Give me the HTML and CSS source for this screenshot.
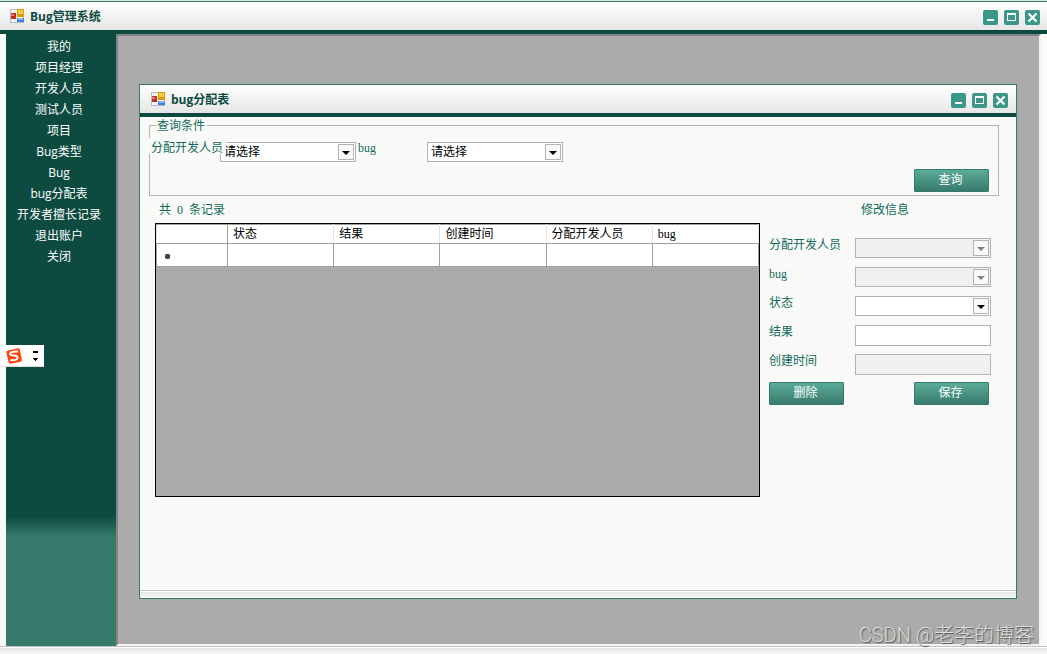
FILE: index.html
```html
<!DOCTYPE html>
<html lang="zh-CN">
<head>
  <meta charset="UTF-8" />
  <meta name="viewport" content="width=device-width, initial-scale=1.0"/>
  <title>Bug管理系统</title>

  <link rel="stylesheet" href="styles.css">
</head>
<body>

<!-- shared icons -->
<svg class="sprite" aria-hidden="true">
  <symbol id="icon-app" viewBox="0 0 14 14">
    <rect x="0.5" y="0.5" width="13" height="13" fill="#f4f5f7" stroke="#b9b9b9"/>
    <rect x="1" y="4" width="5" height="6" fill="#c22f22"/>
    <rect x="1" y="5" width="3" height="2" fill="#e8796b"/>
    <rect x="7" y="0" width="7" height="8" fill="#dd9d0c"/>
    <rect x="8" y="1" width="5" height="4" fill="#f7c93f"/>
    <rect x="7" y="9" width="7" height="4" fill="#3f7fe6"/>
    <rect x="8" y="9" width="5" height="2" fill="#8db8fb"/>
  </symbol>
  <symbol id="icon-min" viewBox="0 0 15 15">
    <rect x="4" y="9" width="7" height="2" fill="#fff"/>
  </symbol>
  <symbol id="icon-max" viewBox="0 0 15 15">
    <path d="M3 3h9v8H3zM4 5v5h7V5z" fill="#fff" fill-rule="evenodd"/>
  </symbol>
  <symbol id="icon-close" viewBox="0 0 15 15">
    <path d="M3.5 3.5l8 8M11.5 3.5l-8 8" stroke="#fff" stroke-width="2.2"/>
  </symbol>
</svg>

<header class="titlebar">
  <svg class="app-icon"><use href="#icon-app"/></svg>
  <h1>Bug管理系统</h1>
  <button class="win-btn" aria-label="最小化"><svg><use href="#icon-min"/></svg></button>
  <button class="win-btn" aria-label="最大化"><svg><use href="#icon-max"/></svg></button>
  <button class="win-btn" aria-label="关闭窗口"><svg><use href="#icon-close"/></svg></button>
</header>

<div class="main">
  <nav class="sidebar">
    <a href="#">我的</a>
    <a href="#">项目经理</a>
    <a href="#">开发人员</a>
    <a href="#">测试人员</a>
    <a href="#">项目</a>
    <a href="#">Bug类型</a>
    <a href="#">Bug</a>
    <a href="#">bug分配表</a>
    <a href="#">开发者擅长记录</a>
    <a href="#">退出账户</a>
    <a href="#">关闭</a>
  </nav>

  <main class="workspace">
    <section class="window">
      <div class="titlebar">
        <svg class="app-icon"><use href="#icon-app"/></svg>
        <h2>bug分配表</h2>
        <button class="win-btn" aria-label="最小化"><svg><use href="#icon-min"/></svg></button>
        <button class="win-btn" aria-label="最大化"><svg><use href="#icon-max"/></svg></button>
        <button class="win-btn" aria-label="关闭窗口"><svg><use href="#icon-close"/></svg></button>
      </div>

      <div class="window-body">
        <fieldset class="query">
          <legend>查询条件</legend>
          <div class="query-fields">
            <label class="dev-label" for="queryDev">分配开发人员</label>
            <div class="combo"><select id="queryDev"><option>请选择</option></select></div>
            <label class="bug-label" for="queryBug">bug</label>
            <div class="combo"><select id="queryBug"><option>请选择</option></select></div>
          </div>
          <button class="btn">查询</button>
        </fieldset>

        <div class="columns">
          <div class="records">
            <div class="count">共&nbsp; 0 &nbsp;条记录</div>
            <div class="grid-box">
              <table>
                <thead>
                  <tr>
                    <th class="row-head"></th>
                    <th>状态</th>
                    <th>结果</th>
                    <th>创建时间</th>
                    <th>分配开发人员</th>
                    <th>bug</th>
                  </tr>
                </thead>
                <tbody>
                  <tr>
                    <td class="row-head"><span class="new-row"></span></td>
                    <td></td>
                    <td></td>
                    <td></td>
                    <td></td>
                    <td></td>
                  </tr>
                </tbody>
              </table>
            </div>
          </div>

          <form class="edit">
            <h3>修改信息</h3>
            <div class="row">
              <label for="dev">分配开发人员</label>
              <div class="combo disabled"><select id="dev" disabled></select></div>
            </div>
            <div class="row">
              <label for="bug">bug</label>
              <div class="combo disabled"><select id="bug" disabled></select></div>
            </div>
            <div class="row">
              <label for="state">状态</label>
              <div class="combo"><select id="state"></select></div>
            </div>
            <div class="row">
              <label for="result">结果</label>
              <input type="text" id="result">
            </div>
            <div class="row">
              <label for="created">创建时间</label>
              <input type="text" id="created" disabled>
            </div>
            <div class="actions">
              <button type="button" class="btn">删除</button>
              <button type="button" class="btn">保存</button>
            </div>
          </form>
        </div>
      </div>

      <div class="statusbar"></div>
    </section>
  </main>
</div>

<div class="statusbar"></div>

<!-- input method bar docked at the left edge -->
<div class="ime">
  <svg class="ime-logo" viewBox="0 0 16 16">
    <path d="M2 2.500L12 0.300q1.400-.2 1.800 1.200L15.900 12q0 1.400-1.300 1.800L4.600 15.800q-1.500 0-1.900-1.300L0.300 4.500q0-1.400 1.700-2z" fill="#f8480f"/>
    <path d="M12 3.600Q5 3.200 4.200 5.600 4 7.400 7.800 7.600 12 7.900 11.600 10 10.600 12.600 4.400 12.200" fill="none" stroke="#fff" stroke-width="2"/>
  </svg>
  <svg class="ime-toggle" viewBox="0 0 5 10">
    <path d="M0 0h5v2H0zM0 7h5v1H4v1H3v1H2V9H1V8H0z"/>
  </svg>
</div>

<div class="watermark">CSDN @老李的博客</div>

</body>
</html>
```

FILE: styles.css
```css
*, *::before, *::after {
  box-sizing: border-box;
}

body {
  display: flex;
  flex-direction: column;
  min-height: 100vh;
  margin: 0;
  background: #f9faf8;
  border-top: 1px solid #e4e4e4;
  font-family: "Liberation Serif", "Noto Sans CJK SC", serif;
  font-size: 12px;
  color: #116a59;
}

h1, h2, h3 {
  margin: 0;
  font-size: 12px;
}

button, input, select {
  margin: 0;
  font-family: inherit;
  font-size: 12px;
}

.sprite {
  position: absolute;
  width: 0;
  height: 0;
}

/* title bars */
.titlebar {
  display: flex;
  align-items: center;
  gap: 6px;
  height: 32px;
  padding: 3px 8px 0 11px;
  background: linear-gradient(#fff, #e6e6e6);
  border-bottom: 4px solid #0c4337;
  border-image: linear-gradient(#0b2a23, #0d4b40) 4;
  border-image-width: 0 0 4px;
}

.titlebar h1,
.titlebar h2 {
  flex: 1;
  margin-bottom: 3px;
  font-family: "Open Sans", "Noto Sans CJK SC", sans-serif;
  line-height: 17px;
  color: #0d4b40;
}

header.titlebar {
  height: 33px;
  margin-top: 0;
  padding: 4px 7px 0 10px;
  border-top: 0;
  box-shadow: inset 0 1px #367a6b;
}

.app-icon {
  width: 14px;
  height: 14px;
  margin-bottom: 3px;
}

.win-btn {
  width: 15px;
  height: 15px;
  padding: 0;
  border: none;
  border-radius: 2px;
  background: #3c9788;
}

.win-btn svg {
  display: block;
  width: 15px;
  height: 15px;
}

.main {
  flex: 1;
  display: flex;
  padding: 0 6px;
}

/* left menu */
.sidebar {
  width: 110px;
  padding: 2px 4px 0 0;
  background: linear-gradient(to top, #367a6b 109px, #0d4b40 130px);
}

.sidebar a {
  display: block;
  line-height: 21px;
  text-align: center;
  text-decoration: none;
  font-family: "Open Sans", "Noto Sans CJK SC", sans-serif;
  color: #fff;
}

.workspace {
  flex: 1;
  display: flex;
  padding: 48px 22px 45px 21px;
  background: #ababab;
  border: 2px solid;
  border-color: #838383 #f3f3f3 #f3f3f3 #838383;
}

/* child window */
.window {
  flex: 1;
  display: flex;
  flex-direction: column;
  border: 1px solid #367a6b;
  background: #f9faf8;
}

.window-body {
  flex: 1;
  padding: 0 17px 0 9px;
}

.statusbar {
  height: 8px;
  background: linear-gradient(#e3e3e3, #f7f7f7);
  border-top: 1px solid #c3c3c3;
  box-shadow: inset 0 1px #fff;
}

.query {
  margin: 0;
  padding: 0;
  border: 1px solid #b3b3b3;
}

.query legend {
  margin-left: 6px;
  padding: 1px 2px 0 1px;
  line-height: 16px;
}

.query-fields {
  display: flex;
  align-items: flex-start;
  padding-top: 4px;
}

.query-fields .combo {
  margin-top: 4px;
}

.query-fields label {
  line-height: 21px;
}

/* opaque label, runs over the edge of the first drop-down */
.query-fields .dev-label {
  position: relative;
  z-index: 1;
  width: 77px;
  height: 16px;
  margin: 0 -6px 0 -1px;
  padding-left: 2px;
  background: #f9faf8;
}

.query-fields .bug-label {
  width: 71px;
  padding-left: 2px;
}

.query .btn {
  display: block;
  margin: 7px 9px 3px auto;
}

.combo {
  position: relative;
  width: 136px;
  height: 20px;
}

.combo select {
  appearance: none;
  display: block;
  width: 100%;
  height: 20px;
  padding: 0 20px 0 3px;
  border: 1px solid #b3b3b3;
  border-radius: 0;
  background: #fff;
  line-height: 18px;
  color: #000;
}

.combo::before {
  content: "";
  position: absolute;
  top: 2px;
  right: 2px;
  width: 16px;
  height: 16px;
  border: 1px solid #b3b3b3;
  background: #f9faf8;
  pointer-events: none;
}

.combo::after {
  content: "";
  position: absolute;
  top: 9px;
  right: 6px;
  border: 4px solid transparent;
  border-top-color: #000;
  border-bottom: none;
  pointer-events: none;
}

.combo.disabled select,
input:disabled {
  background: #f0f0f0;
  opacity: 1;
}

.combo.disabled::after {
  border-top-color: #838383;
}

.btn {
  width: 75px;
  height: 23px;
  padding: 0 2px 1px 0;
  border: 1px solid #367a6b;
  border-radius: 1px;
  background: linear-gradient(#5cac9a, #367a6b);
  line-height: 20px;
  color: #fff;
}

.columns {
  display: flex;
  gap: 9px;
  padding: 4px 8px 0 6px;
}

.records {
  flex: 1;
}

.count {
  padding-left: 4px;
  line-height: 20px;
  margin-bottom: 3px;
}

.grid-box {
  height: 274px;
  border: 1px solid #000;
  background: #ababab;
}

table {
  width: 100%;
  table-layout: fixed;
  border-collapse: collapse;
  color: #000;
}

th, td {
  padding: 0 5px;
  border: 1px solid #a0a0a0;
  background: #fff;
  text-align: left;
}

th {
  height: 19px;
  border-left-color: #e3e3e3;
  border-right-color: #e3e3e3;
  line-height: 18px;
  font-weight: normal;
}

td {
  height: 23px;
}

.row-head {
  width: 71px;
  border-right-color: #a0a0a0;
}

.new-row {
  display: block;
  width: 5px;
  height: 5px;
  margin: 3px 0 0 3px;
  border-radius: 2px;
  background: #444;
  box-shadow: 0 0 1px #888;
}

/* edit form */
.edit {
  width: 222px;
}

.edit h3 {
  margin-bottom: 14px;
  padding-left: 92px;
  line-height: 20px;
  font-weight: normal;
}

.row {
  display: flex;
  justify-content: space-between;
  height: 29px;
}

.row label {
  line-height: 23px;
}

.row .combo,
.row input {
  margin-top: 4px;
}

.row input {
  width: 136px;
  height: 21px;
  padding: 0 3px;
  border: 1px solid #b3b3b3;
  background: #fff;
}

.row input:disabled {
  background: #f0f0f0;
}

.actions {
  display: flex;
  justify-content: space-between;
  padding: 3px 2px 0 0;
}

.ime {
  position: absolute;
  top: 345px;
  left: 0;
  display: flex;
  align-items: center;
  gap: 11px;
  width: 44px;
  height: 22px;
  padding-left: 6px;
  background: #fff;
  border-bottom: 1px solid #ddd;
}

.ime-logo {
  width: 16px;
  height: 16px;
}

.ime-toggle {
  width: 5px;
  height: 10px;
}

.watermark {
  position: absolute;
  right: 13px;
  bottom: 6px;
  font-family: Roboto, "Noto Sans CJK SC", sans-serif;
  font-size: 20px;
  font-weight: 300;
  line-height: 26px;
  color: #dcdcdc;
  text-shadow: 1px 1px 1px #555;
}
```
